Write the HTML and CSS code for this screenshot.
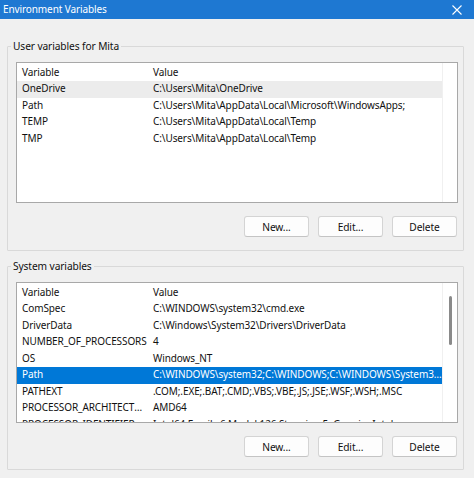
FILE: index.html
```html
<!DOCTYPE html>
<html>
<head>
<meta charset="utf-8">
<link rel="stylesheet" href="styles.css">
</head>
<body>
<div class="dialog">
  <div class="titlebar">
    <span class="title">Environment Variables</span>
    <svg class="close" width="10" height="10" viewBox="0 0 10 10"><path d="M0.5 0.5L9.5 9.5M9.5 0.5L0.5 9.5" stroke="#fff" stroke-width="1.1" fill="none"/></svg>
  </div>

  <fieldset class="group group-user">
    <legend>User variables for Mita</legend>
    <div class="list list-user">
      <div class="rows">
        <div class="row header"><span>Variable</span><span>Value</span></div>
        <div class="row hover"><span>OneDrive</span><span>C:\Users\Mita\OneDrive</span></div>
        <div class="row"><span>Path</span><span>C:\Users\Mita\AppData\Local\Microsoft\WindowsApps;</span></div>
        <div class="row"><span>TEMP</span><span>C:\Users\Mita\AppData\Local\Temp</span></div>
        <div class="row"><span>TMP</span><span>C:\Users\Mita\AppData\Local\Temp</span></div>
      </div>
      <div class="scroll"></div>
    </div>
    <div class="buttons">
      <button class="btn">New...</button>
      <button class="btn">Edit...</button>
      <button class="btn">Delete</button>
    </div>
  </fieldset>

  <fieldset class="group group-system">
    <legend>System variables</legend>
    <div class="list list-system">
      <div class="rows">
        <div class="row header"><span>Variable</span><span>Value</span></div>
        <div class="row"><span>ComSpec</span><span>C:\WINDOWS\system32\cmd.exe</span></div>
        <div class="row"><span>DriverData</span><span>C:\Windows\System32\Drivers\DriverData</span></div>
        <div class="row"><span>NUMBER_OF_PROCESSORS</span><span>4</span></div>
        <div class="row"><span>OS</span><span>Windows_NT</span></div>
        <div class="row selected"><span>Path</span><span>C:\WINDOWS\system32;C:\WINDOWS;C:\WINDOWS\System32\Wbem;C:\WINDOWS\System32\WindowsPowerShell\v1.0\</span></div>
        <div class="row"><span>PATHEXT</span><span>.COM;.EXE;.BAT;.CMD;.VBS;.VBE;.JS;.JSE;.WSF;.WSH;.MSC</span></div>
        <div class="row"><span>PROCESSOR_ARCHITECTURE</span><span>AMD64</span></div>
        <div class="row"><span>PROCESSOR_IDENTIFIER</span><span>Intel64 Family 6 Model 126 Stepping 5, GenuineIntel</span></div>
      </div>
      <div class="scroll"><div class="thumb"></div></div>
    </div>
    <div class="buttons">
      <button class="btn">New...</button>
      <button class="btn">Edit...</button>
      <button class="btn">Delete</button>
    </div>
  </fieldset>
</div>
</body>
</html>
```

FILE: styles.css
```css
html, body {
  margin: 0;
  padding: 0;
  background: #f0f0f0;
}
body {
  width: 474px;
  height: 478px;
  overflow: hidden;
  font-family: "Noto Sans", "Open Sans", sans-serif;
  font-size: 10px;
  letter-spacing: -0.1px;
  color: #111;
}
.dialog {
  width: 474px;
  height: 478px;
  background: #f0f0f0;
  display: flex;
  flex-direction: column;
}
.titlebar {
  height: 19px;
  flex: none;
  background: #1e78d2;
  display: flex;
  align-items: center;
  justify-content: space-between;
  padding: 0 12px 0 3px;
  color: #fff;
}
.title {
  font-size: 10px;
  line-height: 19px;
}
.close {
  display: block;
}
.group {
  box-sizing: border-box;
  width: 457px;
  margin: 0 0 0 7px;
  border: 1px solid #d9d9d9;
  border-radius: 1px;
  padding: 8px 5px 12px 8px;
  min-width: 0;
}
.group-user {
  margin-top: 19px;
  padding-bottom: 13px;
}
.group-system {
  margin-top: 7px;
}
legend {
  padding: 0 2px;
  margin-left: -5px;
  line-height: 16px;
  font-size: 10.2px;
  color: #111;
}
.list {
  box-sizing: border-box;
  width: 442px;
  border: 1px solid #a8a8a8;
  background: #fff;
  display: flex;
  overflow: hidden;
}
.list-user {
  height: 141px;
}
.list-system {
  height: 140.5px;
}
.rows {
  width: 425px;
  flex: none;
  overflow: hidden;
}
.row {
  display: grid;
  grid-template-columns: 131px 294px;
  height: 16.5px;
  line-height: 15.5px;
  white-space: nowrap;
}
.row span {
  overflow: hidden;
  text-overflow: ellipsis;
  padding-left: 5px;
}
.row.header {
  height: 18px;
  line-height: 18px;
}
.row.hover {
  background: #ececec;
}
.row.selected {
  background: #0078d7;
  color: #fff;
}
.scroll {
  flex: 1;
  background: #fff;
  border-left: 1px solid #f0f0f0;
  display: flex;
  justify-content: center;
  padding-top: 13px;
}
.thumb {
  width: 3px;
  height: 49px;
  background: #8a8a8a;
  border-radius: 2px;
}
.buttons {
  display: flex;
  justify-content: flex-end;
  gap: 9px;
  padding-right: 1px;
  margin-top: 13px;
}
.list-system + .buttons {
  margin-top: 13.5px;
}
.btn {
  box-sizing: border-box;
  width: 65px;
  height: 21px;
  padding: 0;
  font-family: "Noto Sans", "Open Sans", sans-serif;
  font-size: 10.2px;
  letter-spacing: -0.1px;
  line-height: 18px;
  color: #111;
  background: #fdfdfd;
  border: 1px solid #d4d4d4;
  border-bottom-color: #c4c4c4;
  border-radius: 3px;
}
```
